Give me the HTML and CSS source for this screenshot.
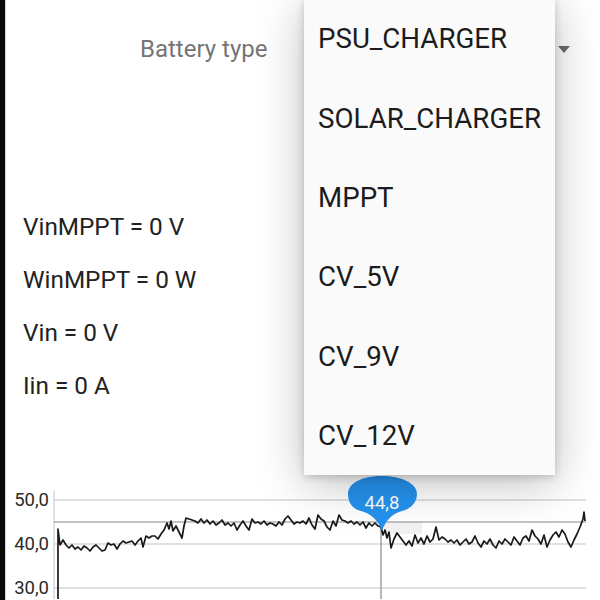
FILE: index.html
```html
<!DOCTYPE html>
<html>
<head>
<meta charset="utf-8">
<link rel="stylesheet" href="styles.css">
</head>
<body>
<div class="screen">
  <div class="edge"></div>
  <div class="main">
    <div class="type-row">
      <span class="type-label">Battery type</span>
      <div class="spinner"><span class="arrow"></span></div>
    </div>
    <div class="stats">
      <div class="stat">VinMPPT = 0 V</div>
      <div class="stat">WinMPPT = 0 W</div>
      <div class="stat">Vin = 0 V</div>
      <div class="stat">Iin = 0 A</div>
    </div>
    <svg class="chart" viewBox="5 470 595 130" width="595" height="130">
      <line class="grid" x1="53" y1="501" x2="585" y2="501"/>
      <line class="grid" x1="53" y1="545" x2="585" y2="545"/>
      <line class="grid" x1="53" y1="589" x2="585" y2="589"/>
      <line class="grid" x1="53" y1="492" x2="53" y2="600"/>
      <rect class="shade" x="383" y="523" width="38" height="12"/>
      <line class="limit" x1="53" y1="523" x2="585" y2="523"/>
      <line class="hl" x1="380" y1="500" x2="380" y2="600"/>
      <text class="ylab" x="48" y="507">50,0</text>
      <text class="ylab" x="48" y="551">40,0</text>
      <text class="ylab" x="48" y="595">30,0</text>
      <polyline class="data" points="57,610 57,530 59,546 62,541 65,546 68,549 71,546 74,550 77,548 80,551 83,547 86,549 89,552 92,548 95,546 98,549 101,552 104,551 107,544 110,546 113,545 116,550 119,545 122,542 125,544 128,543 131,542 134,546 137,542 140,539 142,548 145,537 148,539 151,537 154,537 157,540 160,535 163,531 166,524 168,530 170,522 172,532 175,527 178,533 181,539 183,527 185,519 188,520 191,521 194,522 197,524 200,520 203,524 206,521 209,525 212,522 215,526 218,524 221,521 224,526 227,524 230,527 233,524 236,531 239,526 242,522 245,527 248,531 251,520 254,524 257,523 260,525 263,522 266,526 269,524 272,525 275,527 278,523 281,526 284,520 287,517 290,521 293,525 296,523 299,524 302,522 305,525 308,519 311,526 314,530 317,516 320,520 323,522 326,528 329,531 332,522 335,527 338,516 341,521 344,522 347,524 350,522 353,525 356,523 359,526 362,523 365,529 368,524 371,527 374,524 377,527 380,528 382,536 384,531 386,539 388,533 390,549 393,540 396,534 399,538 402,542 405,546 408,542 411,547 414,536 417,544 420,539 423,545 426,537 429,543 432,540 435,528 438,541 441,538 444,540 447,543 450,541 453,544 456,541 459,546 462,543 465,540 468,545 471,543 474,537 477,544 480,548 483,542 486,545 489,540 492,546 495,549 498,542 501,545 504,540 507,543 510,546 513,538 516,542 519,546 522,539 525,537 528,542 531,531 534,537 537,540 540,545 543,536 546,548 549,541 552,536 555,533 558,538 561,531 564,535 567,543 570,548 573,541 576,535 579,528 582,520 583,513 584,522"/>
      <path class="bubble" d="M381,532 C377,520 368,514 360,512 C351,510 347,503 347,495 C347,484 361,477 381,477 C400,477 416,484 416,495 C416,503 410,510 401,512 C393,514 385,520 381,532 Z"/>
      <text class="bubble-text" x="381" y="510">44,8</text>
    </svg>
  </div>
  <div class="popup">
    <div class="opt">PSU_CHARGER</div>
    <div class="opt">SOLAR_CHARGER</div>
    <div class="opt">MPPT</div>
    <div class="opt">CV_5V</div>
    <div class="opt">CV_9V</div>
    <div class="opt">CV_12V</div>
  </div>
</div>
</body>
</html>
```

FILE: styles.css
```css
html, body {
  margin: 0;
  padding: 0;
  background: #ffffff;
}
body {
  font-family: Roboto, "Noto Sans", "Liberation Sans", sans-serif;
}
.screen {
  position: relative;
  width: 600px;
  height: 600px;
  overflow: hidden;
  display: flex;
}
.edge {
  width: 5px;
  flex: none;
  background: #0a0a0a;
  border-right: 1px solid #d8d8d8;
}
.main {
  flex: 1;
  display: flex;
  flex-direction: column;
  background: #ffffff;
}
.type-row {
  height: 98px;
  display: flex;
  align-items: center;
  padding-left: 134px;
}
.type-label {
  font-size: 24px;
  color: #757575;
}
.spinner {
  flex: 1;
  display: flex;
  justify-content: flex-end;
  align-items: center;
  padding-right: 31px;
}
.arrow {
  width: 0;
  height: 0;
  border-left: 6px solid transparent;
  border-right: 6px solid transparent;
  border-top: 7px solid #6a6a6a;
}
.stats {
  margin-top: 102px;
  padding-left: 17px;
  display: flex;
  flex-direction: column;
}
.stat {
  font-size: 24.3px;
  line-height: 53px;
  height: 53px;
  color: #222222;
}
.chart {
  margin-top: 57px;
  display: block;
}
.grid {
  stroke: #d6d6d6;
  stroke-width: 1.5;
}
.limit {
  stroke: #8a8a8a;
  stroke-width: 1.2;
}
.shade {
  fill: #f1f1f1;
}
.hl {
  stroke: #a0a0a0;
  stroke-width: 1.5;
}
.ylab {
  font-family: Roboto, "Noto Sans", sans-serif;
  font-size: 18.5px;
  fill: #2a2a2a;
  text-anchor: end;
}
.data {
  fill: none;
  stroke: #1a1a1a;
  stroke-width: 1.7;
  stroke-linejoin: round;
}
.bubble {
  fill: #2592ee;
}
.bubble-text {
  font-family: Roboto, "Noto Sans", sans-serif;
  font-size: 18.5px;
  fill: #ffffff;
  text-anchor: middle;
}
.popup {
  position: absolute;
  left: 304px;
  top: -1px;
  width: 251px;
  background: #fafafa;
  box-shadow: 0 8px 44px rgba(0, 0, 0, 0.26), 0 2px 8px rgba(0, 0, 0, 0.18);
  display: flex;
  flex-direction: column;
}
.opt {
  height: 79.4px;
  display: flex;
  align-items: center;
  padding-left: 14px;
  font-size: 27.7px;
  color: #1c1c1c;
}
```
